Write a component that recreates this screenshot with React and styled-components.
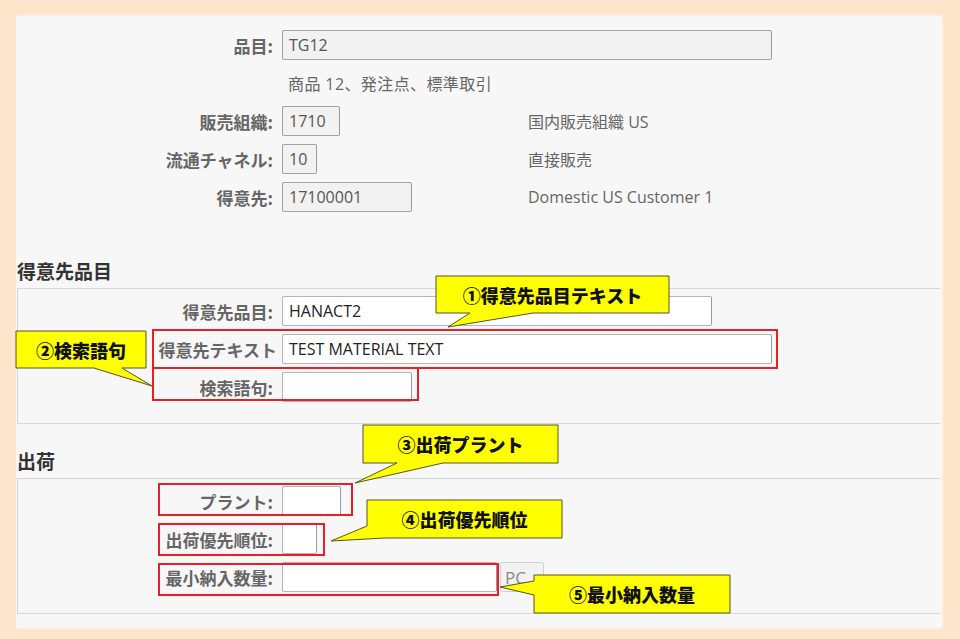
import React from "react";
import styled, { createGlobalStyle } from "styled-components";

const GlobalStyle = createGlobalStyle`
  html, body {
    margin: 0;
    padding: 0;
    background: #fde5cc;
  }
  body {
    font-family: "Open Sans", "Noto Sans CJK JP", sans-serif;
  }
`;

const Page = styled.div`
  position: relative;
  width: 960px;
  height: 639px;
  box-sizing: border-box;
  padding: 16px 20px 0 16px;
  overflow: hidden;
`;

const Panel = styled.div`
  background: #f7f7f7;
  width: 924px;
  box-sizing: border-box;
  padding: 14px 0 14px 0;
  box-shadow: 2px 0 3px rgba(255, 255, 255, 0.9);
`;

const FieldList = styled.div`
  display: flex;
  flex-direction: column;
  gap: 8px;
`;

const Row = styled.div`
  display: flex;
  align-items: center;
  height: 30px;
`;

const Label = styled.label`
  flex: none;
  width: ${({ $width }) => $width || 257}px;
  margin-right: ${({ $overhang }) => 9 - ($overhang || 0)}px;
  margin-left: ${({ $overhang }) => $overhang || 0}px;
  text-align: right;
  font-family: "Noto Sans CJK JP", sans-serif;
  font-size: 17px;
  font-weight: 700;
  color: #666;
  white-space: nowrap;
`;

const Cell = styled.div`
  flex: none;
  width: ${({ $width }) => $width}px;
`;

const Input = styled.div`
  box-sizing: border-box;
  height: 30px;
  width: ${({ $width }) => $width}px;
  padding: 0 6px;
  display: flex;
  align-items: center;
  border: 1px solid ${({ $readOnly }) => ($readOnly ? "#a3a3a3" : "#b5b5b5")};
  border-right-color: #9a9a9a;
  border-radius: 2px;
  background: ${({ $readOnly }) => ($readOnly ? "#f2f2f2" : "#ffffff")};
  font-size: 16px;
  color: ${({ $readOnly }) => ($readOnly ? "#555" : "#222")};
  white-space: nowrap;
`;

const Unit = styled(Input)`
  margin-left: 3px;
  padding: 0 4px;
  border-color: #cfcfcf;
  background: #f2f2f2;
  color: #888;
  font-size: 17px;
`;

const Text = styled.span`
  padding-left: 6px;
  font-size: 16px;
  color: #666;
  white-space: nowrap;
  letter-spacing: 0.4px;
`;

const Desc = styled.span`
  font-size: 16px;
  color: #666;
  white-space: nowrap;
`;

const Heading = styled.h3`
  margin: ${({ $top }) => $top}px 0 6px 1px;
  height: 22px;
  line-height: 22px;
  font-family: "Noto Sans CJK JP", sans-serif;
  font-size: 19px;
  font-weight: 700;
  color: #333;
`;

const Section = styled.div`
  margin-left: 1px;
  padding: 7px 0 21px;
  border: 1px solid #d6d6d6;
  border-right: none;
`;

const Overlay = styled.div`
  position: absolute;
  inset: 0;
  pointer-events: none;
`;

const Mark = styled.div`
  position: absolute;
  box-sizing: border-box;
  border: 2px solid #e5202a;
`;

const CalloutText = styled.div`
  position: absolute;
  display: flex;
  align-items: center;
  justify-content: center;
  font-family: "Noto Sans CJK JP", sans-serif;
  font-size: 18px;
  font-weight: 900;
  color: #111;
  white-space: nowrap;
`;

const marks = [
  [152, 329, 626, 40],
  [152, 367, 267, 34],
  [158, 483, 195, 33],
  [158, 523, 167, 33],
  [158, 563, 341, 33],
];

const callouts = [
  {
    text: "①得意先品目テキスト",
    box: [436, 276, 233, 37],
    d: "M436 276 H669 V313 H533 L448 327 L470 313 H436 Z",
  },
  {
    text: "②検索語句",
    box: [16, 331, 130, 37],
    d: "M16 331 H146 V368 H122 L152 386 L94 368 H16 Z",
  },
  {
    text: "③出荷プラント",
    box: [363, 425, 195, 38],
    d: "M363 425 H558 V463 H443 L355 483 L397 463 H363 Z",
  },
  {
    text: "④出荷優先順位",
    box: [367, 500, 195, 38],
    d: "M367 500 H562 V538 H385 L331 541 L367 526 Z",
  },
  {
    text: "⑤最小納入数量",
    box: [534, 575, 196, 38],
    d: "M534 575 H730 V613 H534 V595 L500 587 L534 581 Z",
  },
];

const App = () => {
  return (
    <Page>
      <GlobalStyle />
      <Panel>
        <FieldList>
          <Row>
            <Label>品目:</Label>
            <Input $readOnly $width={490}>TG12</Input>
          </Row>
          <Row>
            <Label />
            <Text>商品 12、発注点、標準取引</Text>
          </Row>
          <Row>
            <Label>販売組織:</Label>
            <Cell $width={246}>
              <Input $readOnly $width={58}>1710</Input>
            </Cell>
            <Desc>国内販売組織 US</Desc>
          </Row>
          <Row>
            <Label>流通チャネル:</Label>
            <Cell $width={246}>
              <Input $readOnly $width={35}>10</Input>
            </Cell>
            <Desc>直接販売</Desc>
          </Row>
          <Row>
            <Label>得意先:</Label>
            <Cell $width={246}>
              <Input $readOnly $width={130}>17100001</Input>
            </Cell>
            <Desc>Domestic US Customer 1</Desc>
          </Row>
        </FieldList>

        <Heading $top={48}>得意先品目</Heading>
        <Section>
          <FieldList>
            <Row>
              <Label $width={255}>得意先品目:</Label>
              <Input $width={430}>HANACT2</Input>
            </Row>
            <Row>
              <Label $width={255} $overhang={4}>得意先テキスト</Label>
              <Input $width={490}>TEST MATERIAL TEXT</Input>
            </Row>
            <Row>
              <Label $width={255}>検索語句:</Label>
              <Input $width={130} />
            </Row>
          </FieldList>
        </Section>

        <Heading $top={26}>出荷</Heading>
        <Section>
          <FieldList>
            <Row>
              <Label $width={255}>プラント:</Label>
              <Input $width={59} />
            </Row>
            <Row>
              <Label $width={255}>出荷優先順位:</Label>
              <Input $width={35} />
            </Row>
            <Row>
              <Label $width={255}>最小納入数量:</Label>
              <Input $width={215} />
              <Unit $width={44}>PC</Unit>
            </Row>
          </FieldList>
        </Section>
      </Panel>

      <Overlay>
        {marks.map(([x, y, w, h], i) => (
          <Mark key={i} style={{ left: x, top: y, width: w, height: h }} />
        ))}
        <svg width="960" height="639" style={{ position: "absolute", left: 0, top: 0 }}>
          {callouts.map((c, i) => (
            <path key={i} d={c.d} fill="#ffff00" stroke="#55552a" strokeWidth="1" />
          ))}
        </svg>
        {callouts.map((c, i) => (
          <CalloutText
            key={i}
            style={{ left: c.box[0], top: c.box[1], width: c.box[2], height: c.box[3] }}
          >
            {c.text}
          </CalloutText>
        ))}
      </Overlay>
    </Page>
  );
};

export default App;
